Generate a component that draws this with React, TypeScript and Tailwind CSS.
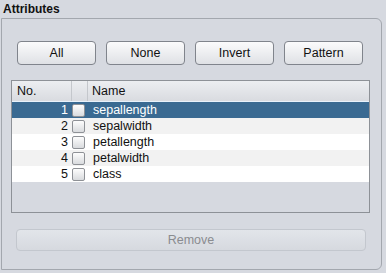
import React from "react";

const rows = ["sepallength", "sepalwidth", "petallength", "petalwidth", "class"];

function Btn({ label, w }: { label: string; w: string }) {
  return (
    <div
      className={`${w} h-[24px] flex items-center justify-center rounded-[4px] border border-[#80848c] bg-gradient-to-b from-[#fbfbfc] to-[#dfe1e5] text-[12.5px] text-[#111]`}
    >
      {label}
    </div>
  );
}

export default function App() {
  return (
    <div
      className="w-[386px] h-[273px] bg-[#d6d9e0] overflow-hidden"
      style={{ fontFamily: '"Liberation Sans", Arial, sans-serif' }}
    >
      <div className="h-[18px] pl-[3px] pt-[2px] text-[12px] font-bold leading-[15px] text-[#111]">
        Attributes
      </div>
      <div className="ml-[1px] w-[381px] h-[252px] border border-[#a3a7ae] rounded-tr-[6px] rounded-br-[6px] flex flex-col">
        <div className="mt-[22px] ml-[15px] flex gap-[10px]">
          <Btn label="All" w="w-[79px]" />
          <Btn label="None" w="w-[79px]" />
          <Btn label="Invert" w="w-[79px]" />
          <Btn label="Pattern" w="w-[79px]" />
        </div>
        <div className="mt-[15px] ml-[9px] w-[359px] h-[133px] border border-[#8d9197] flex flex-col bg-[#d6d9e0]">
          <div className="h-[21px] flex bg-gradient-to-b from-[#eceef1] to-[#d9dbe0] border-b border-[#e8f2fb] text-[12.5px] text-[#111]">
            <div className="w-[60px] border-r border-[#c4c7cc] pl-[5px] flex items-center">No.</div>
            <div className="w-[16px] border-r border-[#c4c7cc]" />
            <div className="flex-1 pl-[4px] flex items-center">Name</div>
          </div>
          {rows.map((r, i) => {
            const sel = i === 0;
            const bg = sel ? "bg-[#3a6a92]" : i % 2 === 1 ? "bg-[#f2f2f2]" : "bg-white";
            return (
              <div
                key={r}
                className={`h-[16px] flex items-center text-[12.5px] ${bg} ${sel ? "text-white" : "text-[#111]"}`}
              >
                <div className="w-[56px] text-right">{i + 1}</div>
                <div className="w-[20px] flex justify-center">
                  <div className="w-[13px] h-[13px] rounded-[2px] border border-[#8e9196] bg-gradient-to-b from-[#fdfdfd] to-[#d9dbde]" />
                </div>
                <div className="pl-[5px]">{r}</div>
              </div>
            );
          })}
        </div>
        <div className="mt-[16px] ml-[14px] w-[350px] h-[22px] flex items-center justify-center rounded-[4px] border border-[#c3c7ce] bg-gradient-to-b from-[#e2e5ea] to-[#d6d9df] text-[12.5px] text-[#8a8c90]">
          Remove
        </div>
      </div>
    </div>
  );
}
